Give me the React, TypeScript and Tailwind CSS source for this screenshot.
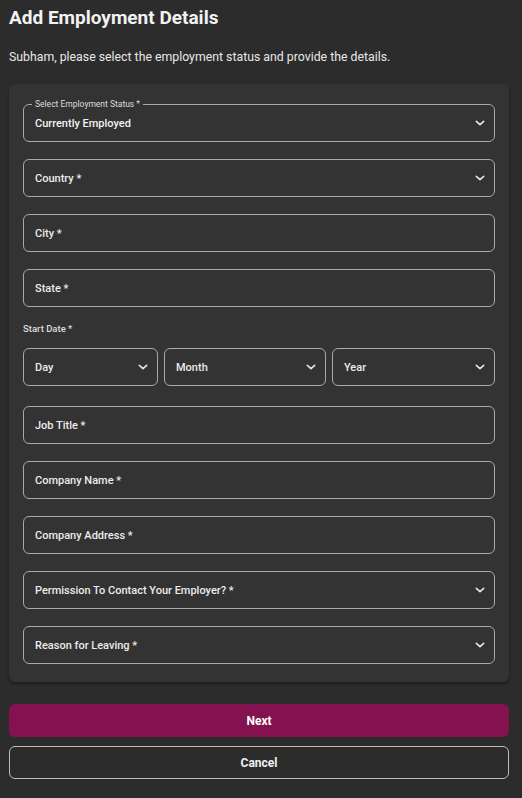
import React from "react";

const Chevron = () => (
  <svg width="16" height="16" viewBox="0 0 24 24" fill="none" stroke="#e5e5e5" strokeWidth="2.4" strokeLinecap="round" strokeLinejoin="round" className="mr-[1px]">
    <path d="M6.5 9.5l5.5 5 5.5-5" />
  </svg>
);

const Field = ({ label, select }: { label: string; select?: boolean }) => (
  <div className="h-[38px] rounded-[6px] border border-[#a9a9a9] flex items-center justify-between pl-[11px] pr-[5px]">
    <span className="mt-[2px] text-[11px] font-medium text-[#ececec]">{label}</span>
    {select && <Chevron />}
  </div>
);

export default function App() {
  return (
    <div className="min-h-[798px] bg-[#2c2c2c] pl-[9px] pr-[13px] pt-[6px] text-white" style={{ fontFamily: "Roboto, 'Liberation Sans', sans-serif" }}>
      <h1 className="text-[19px] font-bold leading-[24px] text-[#f2f2f2]">Add Employment Details</h1>
      <p className="mt-[18px] text-[12.3px] leading-[18px] text-[#e8e8e8]">Subham, please select the employment status and provide the details.</p>
      <div className="mt-[18px] rounded-[6px] bg-[#333333] px-[14px] pt-[20px] pb-[18px] shadow-[0_2px_3px_rgba(0,0,0,0.35)]">
        <div className="flex flex-col gap-[17px]">
          <div className="relative h-[38px] rounded-[6px] border border-[#a9a9a9] flex items-center justify-between pl-[11px] pr-[5px]">
            <span className="absolute left-[8px] top-[-6px] bg-[#333333] px-[3px] text-[8.5px] leading-[10px] text-[#dcdcdc]">Select Employment Status *</span>
            <span className="text-[11px] font-medium text-[#f2f2f2] mt-[2px]">Currently Employed</span>
            <Chevron />
          </div>
          <Field label="Country *" select />
          <Field label="City *" />
          <Field label="State *" />
        </div>
        <div className="mt-[16px] text-[9.5px] font-medium text-[#dcdcdc] leading-[12px]">Start Date *</div>
        <div className="mt-[13px] grid grid-cols-[135px_162px_1fr] gap-[6px]">
          <Field label="Day" select />
          <Field label="Month" select />
          <Field label="Year" select />
        </div>
        <div className="mt-[20px] flex flex-col gap-[17px]">
          <Field label="Job Title *" />
          <Field label="Company Name *" />
          <Field label="Company Address *" />
          <Field label="Permission To Contact Your Employer? *" select />
          <Field label="Reason for Leaving *" select />
        </div>
      </div>
      <button className="mt-[22px] w-full h-[33px] rounded-[6px] bg-[#841150] text-[12px] font-bold text-white">Next</button>
      <button className="mt-[9px] w-full h-[33px] rounded-[6px] border border-[#bdbdbd] text-[12px] font-bold text-[#f0f0f0]">Cancel</button>
    </div>
  );
}
